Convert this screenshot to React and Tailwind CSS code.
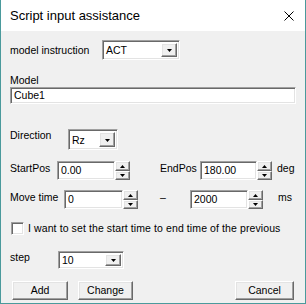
import React from "react";

const font = { fontFamily: '"Liberation Sans", Arial, sans-serif' };

const sunken =
  "bg-white border border-t-[#a0a0a0] border-l-[#a0a0a0] border-r-white border-b-white shadow-[inset_1px_1px_0_#696969,inset_-1px_-1px_0_#e3e3e3]";
const raised =
  "bg-[#f0f0f0] border border-t-white border-l-white border-r-[#696969] border-b-[#696969] shadow-[inset_-1px_-1px_0_#a0a0a0,inset_1px_1px_0_#e3e3e3]";

function DownTri({ w = 5 }) {
  return (
    <svg width={w} height={Math.ceil(w / 2)} viewBox={`0 0 ${w} ${Math.ceil(w / 2)}`}>
      <polygon points={`0,0 ${w},0 ${w / 2},${Math.ceil(w / 2)}`} fill="#000" />
    </svg>
  );
}
function UpTri({ w = 3 }) {
  return (
    <svg width={w} height={Math.ceil(w / 2)} viewBox={`0 0 ${w} ${Math.ceil(w / 2)}`}>
      <polygon points={`0,${Math.ceil(w / 2)} ${w},${Math.ceil(w / 2)} ${w / 2},0`} fill="#000" />
    </svg>
  );
}

function Combo({ value, w, h }) {
  return (
    <div className={`${sunken} flex items-stretch p-[2px] ${w} ${h}`}>
      <div className="flex-1 pl-[1px] text-[10.5px] leading-[14px] flex items-center">{value}</div>
      <div className={`${raised} w-[16px] flex items-center justify-center pt-[1px]`}>
        <DownTri w={5} />
      </div>
    </div>
  );
}

function Spin() {
  return (
    <div className="flex flex-col w-[15px] h-[19px]">
      <div className={`${raised} h-[10px] flex items-center justify-center`}>
        <UpTri w={5} />
      </div>
      <div className={`${raised} h-[9px] flex items-center justify-center`}>
        <DownTri w={5} />
      </div>
    </div>
  );
}

function Edit({ value, w }) {
  return (
    <div className={`${sunken} ${w} h-[19px] pl-[3px] text-[10.5px] leading-[17px]`}>{value}</div>
  );
}

function Button({ children, w }) {
  return (
    <div className={`${raised} ${w} h-[19px] flex items-center justify-center text-[10.5px]`}>
      {children}
    </div>
  );
}

export default function App() {
  return (
    <div
      className="w-[306px] h-[304px] bg-[#f0f0f0] border-l border-r border-b border-[#4a9a9c] flex flex-col text-black"
      style={font}
    >
      <div className="h-[31px] bg-white flex items-center justify-between pl-[9px] pr-[11px]">
        <span className="text-[13px] leading-none">Script input assistance</span>
        <svg width="10" height="10" viewBox="0 0 10 10">
          <path d="M0.5 0.5 L9.5 9.5 M9.5 0.5 L0.5 9.5" stroke="#000" strokeWidth="1" />
        </svg>
      </div>

      <div className="pl-[9px] flex flex-col text-[10.5px] leading-[13px]">
        <div className="mt-[9px] flex items-start">
          <div className="w-[92px] pt-[4px]">model instruction</div>
          <Combo value="ACT" w="w-[78px]" h="h-[20px]" />
        </div>

        <div className="mt-[14px] h-[13px]">Model</div>
        <div className={`${sunken} w-[286px] h-[17px] pl-[3px] text-[10.5px] leading-[15px]`}>Cube1</div>

        <div className="mt-[25px] flex items-start">
          <div className="w-[58px]">Direction</div>
          <Combo value="Rz" w="w-[50px]" h="h-[21px]" />
        </div>

        <div className="mt-[11px] flex items-start">
          <div className="w-[47px] pt-[1px]">StartPos</div>
          <Edit value="0.00" w="w-[58px]" />
          <Spin />
          <div className="ml-[30px] w-[40px] pt-[1px]">EndPos</div>
          <Edit value="180.00" w="w-[57px]" />
          <Spin />
          <div className="ml-[5px] pt-[1px]">deg</div>
        </div>

        <div className="mt-[10px] flex items-start">
          <div className="w-[54px] pt-[1px]">Move time</div>
          <Edit value="0" w="w-[59px]" />
          <Spin />
          <div className="ml-[22px] w-[30px] pt-[1px]">–</div>
          <Edit value="2000" w="w-[58px]" />
          <Spin />
          <div className="ml-[15px] pt-[1px]">ms</div>
        </div>

        <div className="mt-[13px] flex items-start">
          <div className={`${sunken} ml-[1px] w-[13px] h-[13px]`} />
          <div className="ml-[4px] tracking-[0.1px]">I want to set the start time to end time of the previous</div>
        </div>

        <div className="mt-[16px] flex items-start">
          <div className="w-[48px]">step</div>
          <Combo value="10" w="w-[66px]" h="h-[18px]" />
        </div>

        <div className="mt-[12px] flex items-start pl-[2px]">
          <Button w="w-[56px]">Add</Button>
          <div className="ml-[10px]">
            <Button w="w-[55px]">Change</Button>
          </div>
          <div className="ml-[102px]">
            <Button w="w-[59px]">Cancel</Button>
          </div>
        </div>
      </div>
    </div>
  );
}
